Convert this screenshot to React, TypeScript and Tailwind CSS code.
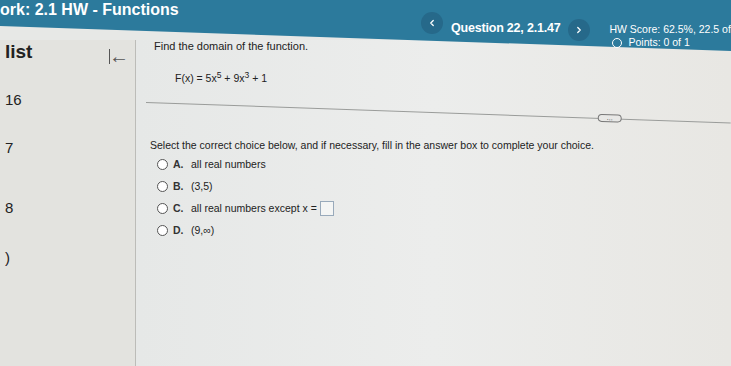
import { ChevronLeft, ChevronRight } from 'lucide-react'

const options = [
    { key: 'A.', body: <span>all real numbers</span> },
    { key: 'B.', body: <span>(3,5)</span> },
    {
        key: 'C.',
        body: (
            <span className="flex items-center">
                all real numbers except x =
                <span className="ml-[3px] inline-block h-[15px] w-[14px] border border-[#9ab] bg-[#f4f5f4]" />
            </span>
        ),
    },
    { key: 'D.', body: <span>(9,∞)</span> },
]

export default function App() {
    return (
        <div className="relative h-[366px] w-[731px] overflow-hidden bg-[#e7e8e6] font-['Liberation_Sans',Arial,sans-serif] text-[#222]">
            {/* header, photographed at an angle */}
            <div className="absolute inset-x-0 top-0 h-[52px] bg-[#2c7a9c] [clip-path:polygon(0_0,100%_0,100%_51px,0_26px)]" />
            <div className="relative z-10 flex h-[40px] text-white">
                <div className="-mt-[2px] w-[421px] shrink-0 whitespace-nowrap text-[16px] font-bold">
                    ork: 2.1 HW - Functions
                </div>
                <div className="flex shrink-0 items-center gap-[8px] pt-[16px]">
                    <span className="-mt-[11px] flex h-[22px] w-[22px] items-center justify-center rounded-full bg-[#26698a]">
                        <ChevronLeft size={10} strokeWidth={3} />
                    </span>
                    <span className="whitespace-nowrap text-[12.5px] font-bold tracking-[-0.2px]">
                        Question 22, 2.1.47
                    </span>
                    <span className="mt-[4px] flex h-[22px] w-[22px] items-center justify-center rounded-full bg-[#26698a]">
                        <ChevronRight size={10} strokeWidth={3} />
                    </span>
                </div>
                <div className="ml-[19px] flex shrink-0 flex-col pt-[23px] text-[10.5px] leading-[13px]">
                    <span className="whitespace-nowrap">HW Score: 62.5%, 22.5 of :</span>
                    <span className="flex items-center gap-[6px] whitespace-nowrap pl-[3px]">
                        <span className="inline-block h-[10px] w-[10px] rounded-full border-[1.5px] border-white" />
                        Points: 0 of 1
                    </span>
                </div>
            </div>

            <div className="flex h-[326px]">
                {/* sidebar */}
                <div className="flex w-[136px] shrink-0 flex-col border-r border-[#bcbcb8] bg-[#e3e3df] pl-[5px]">
                    <div className="flex h-[24px] items-center justify-between pr-[6px]">
                        <span className="text-[19px] font-bold leading-[24px]">list</span>
                        <span className="mt-[8px] flex items-center text-[#555]">
                            <span className="h-[15px] w-px bg-[#555]" />
                            <span className="-ml-[1px] text-[20px] font-light leading-none">←</span>
                        </span>
                    </div>
                    <span className="mt-[27px] h-[18px] text-[15px] leading-[18px]">16</span>
                    <span className="mt-[30px] h-[18px] text-[15px] leading-[18px]">7</span>
                    <span className="mt-[42px] h-[18px] text-[15px] leading-[18px]">8</span>
                    <span className="mt-[32px] h-[18px] text-[15px] leading-[18px]">)</span>
                </div>

                {/* main */}
                <div className="flex flex-1 flex-col bg-gradient-to-r from-[#e6e8e7] via-[#ecedec] to-[#e8e7e3] pl-[18px]">
                    <p className="h-[13px] text-[11px] leading-[13px]">Find the domain of the function.</p>
                    <p className="ml-[21px] mt-[18px] h-[14px] text-[10.5px] leading-[14px]">
                        F(x) = 5x<sup className="text-[8.5px]">5</sup> + 9x<sup className="text-[8.5px]">3</sup> + 1
                    </p>
                    <div className="relative -ml-[8px] mt-[17px] h-px shrink-0 origin-left rotate-[2deg] bg-[#9a9c9a]">
                        <span className="absolute left-[452px] top-[-4px] h-[8px] w-[24px] rounded-full border border-[#777] bg-[#e8e8e6] text-center text-[7px] leading-[5px]">
                            ...
                        </span>
                    </div>
                    <p className="-ml-[4px] mt-[36px] h-[13px] whitespace-nowrap text-[10.5px] leading-[13px]">
                        Select the correct choice below, and if necessary, fill in the answer box to complete your choice.
                    </p>
                    <div className="mt-[5px] flex flex-col gap-[7px] pl-[3px] text-[10.5px]">
                        {options.map((o) => (
                            <div key={o.key} className="flex h-[15px] items-center">
                                <span className="inline-block h-[11px] w-[11px] rounded-full border border-[#555] bg-white" />
                                <span className="ml-[5px] w-[18px] font-bold text-[#333]">{o.key}</span>
                                {o.body}
                            </div>
                        ))}
                    </div>
                </div>
            </div>
        </div>
    )
}
